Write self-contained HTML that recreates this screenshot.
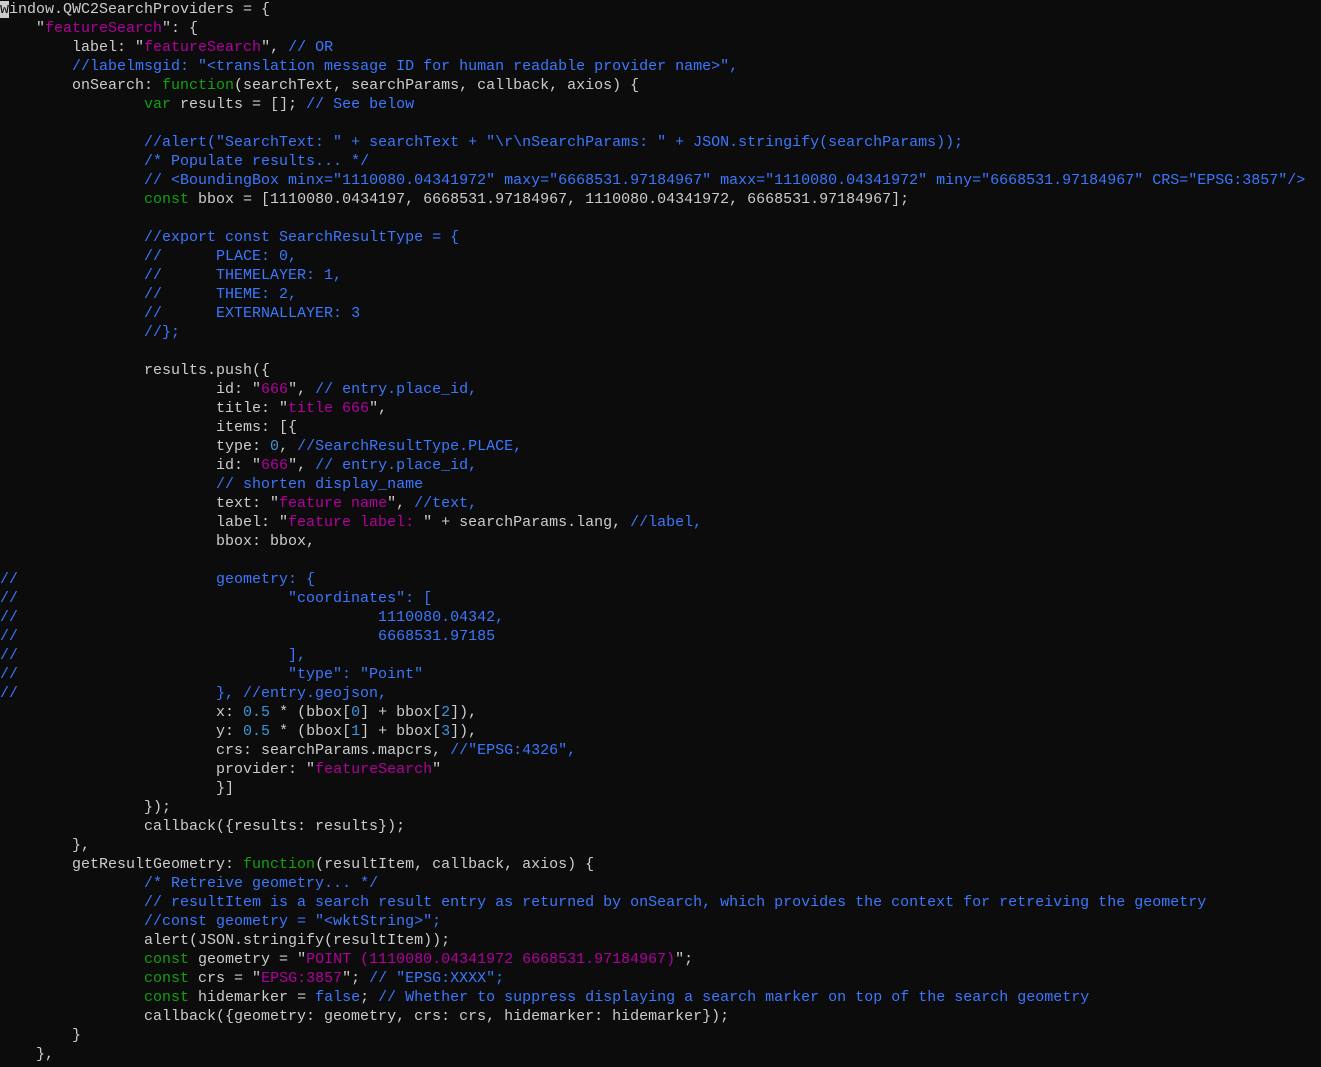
<!DOCTYPE html>
<html><head><meta charset="utf-8">
<style>
html,body{margin:0;padding:0;background:#0c0c0c;width:1321px;height:1067px;overflow:hidden}
pre{margin:0;padding:0;font-family:"Liberation Mono",monospace;font-size:15px;line-height:19px;color:#cccccc;white-space:pre}
.s{color:#b4009e}.c{color:#3b78ff}.k{color:#13a10e}.n{color:#3a96dd}
.cur{background:#cccccc;color:#0c0c0c}
</style></head><body><pre><span class="cur">w</span>indow.QWC2SearchProviders = {
    "<span class="s">featureSearch</span>": {
        label: "<span class="s">featureSearch</span>", <span class="c">// OR</span>
        <span class="c">//labelmsgid: "&lt;translation message ID for human readable provider name&gt;",</span>
        onSearch: <span class="k">function</span>(searchText, searchParams, callback, axios) {
                <span class="k">var</span> results = []; <span class="c">// See below</span>

                <span class="c">//alert("SearchText: " + searchText + "\r\nSearchParams: " + JSON.stringify(searchParams));</span>
                <span class="c">/* Populate results... */</span>
                <span class="c">// &lt;BoundingBox minx="1110080.04341972" maxy="6668531.97184967" maxx="1110080.04341972" miny="6668531.97184967" CRS="EPSG:3857"/&gt;</span>
                <span class="k">const</span> bbox = [1110080.0434197, 6668531.97184967, 1110080.04341972, 6668531.97184967];

                <span class="c">//export const SearchResultType = {</span>
                <span class="c">//      PLACE: 0,</span>
                <span class="c">//      THEMELAYER: 1,</span>
                <span class="c">//      THEME: 2,</span>
                <span class="c">//      EXTERNALLAYER: 3</span>
                <span class="c">//};</span>

                results.push({
                        id: "<span class="s">666</span>", <span class="c">// entry.place_id,</span>
                        title: "<span class="s">title 666</span>",
                        items: [{
                        type: <span class="n">0</span>, <span class="c">//SearchResultType.PLACE,</span>
                        id: "<span class="s">666</span>", <span class="c">// entry.place_id,</span>
                        <span class="c">// shorten display_name</span>
                        text: "<span class="s">feature name</span>", <span class="c">//text,</span>
                        label: "<span class="s">feature label: </span>" + searchParams.lang, <span class="c">//label,</span>
                        bbox: bbox,

<span class="c">//                      geometry: {</span>
<span class="c">//                              "coordinates": [</span>
<span class="c">//                                        1110080.04342,</span>
<span class="c">//                                        6668531.97185</span>
<span class="c">//                              ],</span>
<span class="c">//                              "type": "Point"</span>
<span class="c">//                      }, //entry.geojson,</span>
                        x: <span class="n">0.5</span> * (bbox[<span class="n">0</span>] + bbox[<span class="n">2</span>]),
                        y: <span class="n">0.5</span> * (bbox[<span class="n">1</span>] + bbox[<span class="n">3</span>]),
                        crs: searchParams.mapcrs, <span class="c">//"EPSG:4326",</span>
                        provider: "<span class="s">featureSearch</span>"
                        }]
                });
                callback({results: results});
        },
        getResultGeometry: <span class="k">function</span>(resultItem, callback, axios) {
                <span class="c">/* Retreive geometry... */</span>
                <span class="c">// resultItem is a search result entry as returned by onSearch, which provides the context for retreiving the geometry</span>
                <span class="c">//const geometry = "&lt;wktString&gt;";</span>
                alert(JSON.stringify(resultItem));
                <span class="k">const</span> geometry = "<span class="s">POINT (1110080.04341972 6668531.97184967)</span>";
                <span class="k">const</span> crs = "<span class="s">EPSG:3857</span>"; <span class="c">// "EPSG:XXXX";</span>
                <span class="k">const</span> hidemarker = <span class="c">false</span>; <span class="c">// Whether to suppress displaying a search marker on top of the search geometry</span>
                callback({geometry: geometry, crs: crs, hidemarker: hidemarker});
        }
    },
</pre></body></html>
